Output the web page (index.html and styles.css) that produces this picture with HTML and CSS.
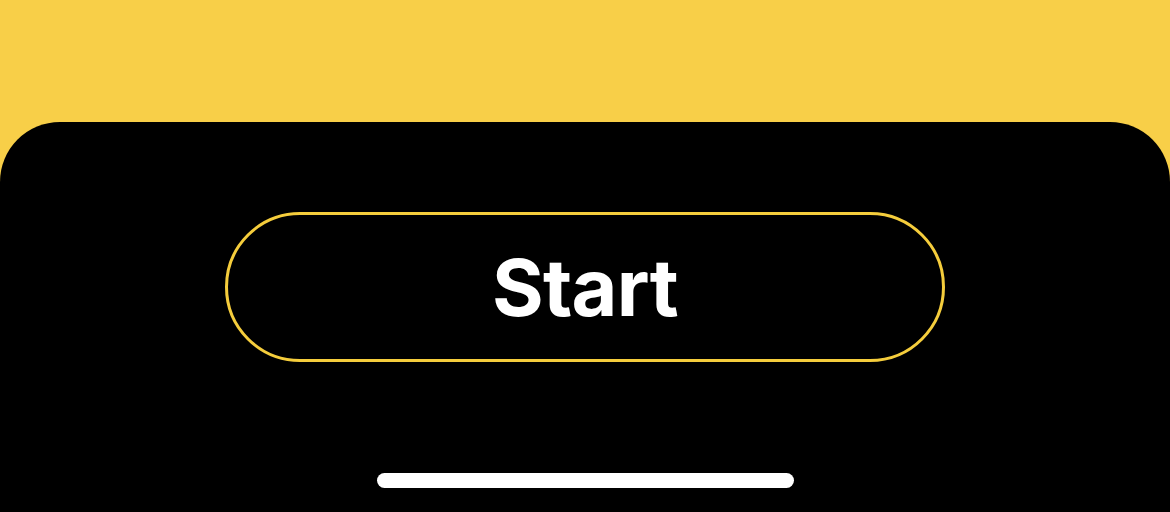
FILE: index.html
```html
<!DOCTYPE html>
<html>
<head>
<meta charset="utf-8">
<link rel="stylesheet" href="styles.css">
</head>
<body>
<div class="screen">
  <div class="top"></div>
  <div class="panel">
    <button class="start">Start</button>
    <div class="home-bar"></div>
  </div>
</div>
</body>
</html>
```
FILE: styles.css
```css
html, body {
  margin: 0;
  padding: 0;
  background: #F8CF48;
}
.screen {
  width: 1170px;
  height: 512px;
  display: flex;
  flex-direction: column;
  overflow: hidden;
}
.top {
  height: 122px;
  flex: none;
}
.panel {
  flex: 1;
  background: #000;
  border-radius: 60px 60px 0 0;
  display: flex;
  flex-direction: column;
  align-items: center;
}
.start {
  margin-top: 90px;
  margin-left: 0;
  width: 720px;
  height: 150px;
  box-sizing: border-box;
  border: 3px solid #F5CD3C;
  border-radius: 75px;
  background: #000;
  color: #fff;
  font-family: Inter, "Liberation Sans", sans-serif;
  font-weight: 700;
  font-size: 79px;
  letter-spacing: -0.7px;
  padding: 0;
  padding-top: 1px;
  line-height: 1;
}
.home-bar {
  margin-top: 111px;
  width: 417px;
  height: 15px;
  border-radius: 8px;
  background: #fff;
}
```
